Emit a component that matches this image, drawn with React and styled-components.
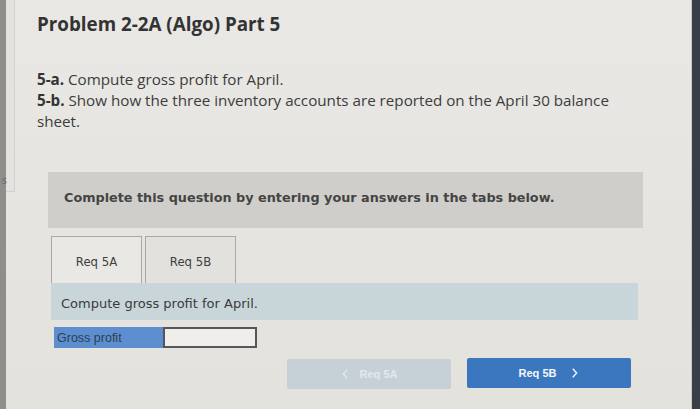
import React from 'react'
import styled, { createGlobalStyle } from 'styled-components';

const GlobalStyle = createGlobalStyle`
    html, body {
        margin: 0;
        padding: 0;
        background: #e6e5e1;
    }
    * {
        box-sizing: border-box;
    }
`;

function App() {
  return (
    <Screen>
        <GlobalStyle />
        <LeftEdge>
            <SidePanel>
                <SideLetter>s</SideLetter>
            </SidePanel>
        </LeftEdge>
        <Main>
            <Title>Problem 2-2A (Algo) Part 5</Title>
            <Prompt>
                <Line><Tag>5-a.</Tag> Compute gross profit for April.</Line>
                <Line><Tag>5-b.</Tag> Show how the three inventory accounts are reported on the April 30 balance sheet.</Line>
            </Prompt>
            <Question>
                <Banner>Complete this question by entering your answers in the tabs below.</Banner>
                <Body>
                    <Tabs>
                        <Tab active>Req 5A</Tab>
                        <Tab>Req 5B</Tab>
                    </Tabs>
                    <TabPanel>Compute gross profit for April.</TabPanel>
                    <AnswerRow>
                        <AnswerLabel>Gross profit</AnswerLabel>
                        <AnswerInput />
                    </AnswerRow>
                    <NavRow>
                        <NavButton disabled>
                            <Chevron viewBox="0 0 10 14"><path d="M7 2 L2.5 7 L7 12" /></Chevron>
                            Req 5A
                        </NavButton>
                        <NavButton primary>
                            Req 5B
                            <Chevron viewBox="0 0 10 14"><path d="M3 2 L7.5 7 L3 12" /></Chevron>
                        </NavButton>
                    </NavRow>
                </Body>
            </Question>
        </Main>
        <RightEdge />
    </Screen>
  )
}

const Screen = styled.div`
    display: flex;
    width: 700px;
    height: 409px;
    overflow: hidden;
    background: linear-gradient(180deg, #e9e8e4 0%, #e5e4e0 60%, #e3e2dd 100%);
    font-family: "Open Sans", "Liberation Sans", sans-serif;
    color: #3a3a3a;
`;
const LeftEdge = styled.div`
    width: 15px;
    flex-shrink: 0;
    border-left: 6px solid #8f8e8b;
    display: flex;
    flex-direction: column;
`;
const SidePanel = styled.div`
    height: 192px;
    border-right: 1px solid #d2d1cd;
    border-bottom: 1px solid #d2d1cd;
    background: #e3e2de;
    display: flex;
    align-items: flex-end;
    padding-bottom: 4px;
`;
const SideLetter = styled.span`
    font-size: 10px;
    color: #666;
    margin-left: -4px;
`;
const Main = styled.div`
    flex: 1;
    padding: 12px 0 0 22px;
`;
const Title = styled.h1`
    margin: 0;
    font-size: 18.8px;
    line-height: 25px;
    font-weight: 700;
    color: #333;
`;
const Prompt = styled.div`
    margin-top: 32px;
    width: 590px;
    font-size: 15.2px;
    line-height: 21px;
    color: #3c3c3c;
`;
const Line = styled.div``;
const Tag = styled.span`
    display: inline-block;
    font-weight: 700;
    color: #333;
`;
const Question = styled.div`
    margin: 40px 0 0 11px;
    width: 595px;
`;
const Banner = styled.div`
    height: 56px;
    background: #cfceca;
    padding: 0 0 6px 16px;
    display: flex;
    align-items: center;
    font-family: "DejaVu Sans", Verdana, sans-serif;
    font-size: 12.8px;
    font-weight: 700;
    color: #444;
`;
const Body = styled.div`
    padding-left: 3px;
`;
const Tabs = styled.div`
    display: flex;
    gap: 3px;
    margin-top: 8px;
`;
const Tab = styled.div`
    width: 91px;
    height: 47px;
    padding-top: 4px;
    display: flex;
    align-items: center;
    justify-content: center;
    font-family: "DejaVu Sans", Verdana, sans-serif;
    font-size: 11.7px;
    color: #3e3e3e;
    border: 1px solid #a9a8a4;
    border-bottom: none;
    background: ${p => (p.active ? '#e9e8e4' : '#e2e1dd')};
`;
const TabPanel = styled.div`
    width: 587px;
    height: 37px;
    background: #c8d6da;
    padding: 3px 0 0 10px;
    display: flex;
    align-items: center;
    font-family: "DejaVu Sans", Verdana, sans-serif;
    font-size: 13px;
    color: #3a3a3a;
`;
const AnswerRow = styled.div`
    display: flex;
    margin: 7px 0 0 3px;
    height: 21px;
`;
const AnswerLabel = styled.div`
    width: 109px;
    background: #5d8fd0;
    padding-left: 3px;
    display: flex;
    align-items: center;
    font-family: "Liberation Sans", Arial, sans-serif;
    font-size: 12.5px;
    color: #2e3e55;
`;
const AnswerInput = styled.div`
    width: 94px;
    background: #efeeea;
    border: 2px solid #55565a;
`;
const NavRow = styled.div`
    width: 580px;
    margin-top: 10px;
    display: flex;
    justify-content: flex-end;
    gap: 16px;
`;
const NavButton = styled.div`
    width: 164px;
    height: 30px;
    border-radius: 2px;
    display: flex;
    align-items: center;
    justify-content: center;
    gap: ${p => (p.primary ? '14px' : '10px')};
    font-family: "Liberation Sans", Arial, sans-serif;
    font-size: 11px;
    font-weight: 700;
    background: ${p => (p.primary ? '#3b77be' : '#c6d0d7')};
    color: ${p => (p.primary ? '#f4f7fb' : '#e3e8ec')};
    margin-top: ${p => (p.primary ? '0' : '1px')};
`;
const Chevron = styled.svg`
    width: 9px;
    height: 12px;
    fill: none;
    stroke: currentColor;
    stroke-width: 1.6;
`;
const RightEdge = styled.div`
    width: 9px;
    flex-shrink: 0;
    background: #3a3e46;
    border-left: 1px solid #c9c9c6;
`;

export default App
